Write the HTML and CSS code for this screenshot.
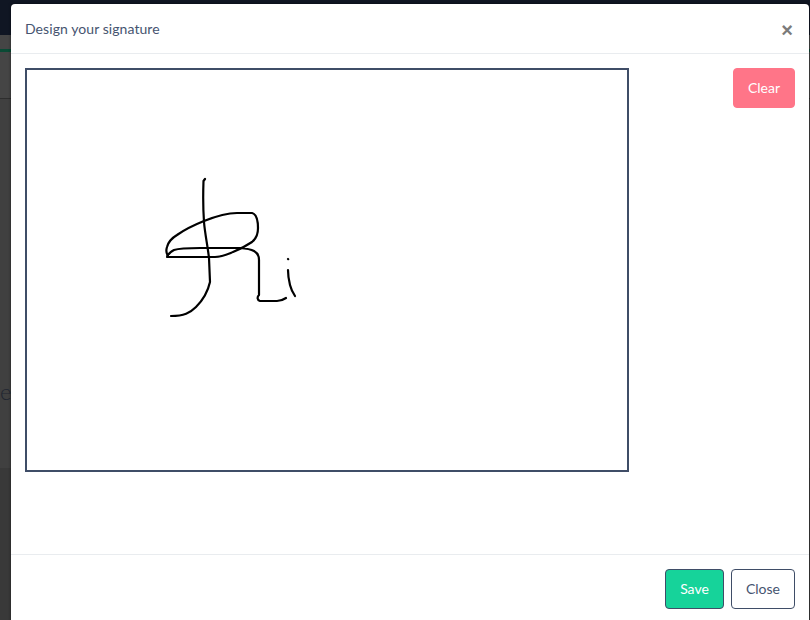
FILE: index.html
```html
<!DOCTYPE html>
<html lang="en">
<head>
    <meta charset="UTF-8">
    <title>Design your signature</title>
    <link rel="stylesheet" href="styles.css">
</head>
<body>

<div class="page-bg">
    <div class="page-top"></div>
    <div class="page-gray"></div>
    <div class="page-green"></div>
    <div class="page-gray page-tall"></div>
    <div class="page-rest"><span class="page-letter">e</span></div>
    <div class="page-low"></div>
</div>

<div class="modal">
    <div class="modal-header">
        <h5 class="modal-title">Design your signature</h5>
        <button class="close-x" type="button">&times;</button>
    </div>
    <div class="modal-body">
        <div class="sig-box">
            <svg class="sig-svg" width="600" height="400" viewBox="27 70 600 400">
                <path d="M205 179 L203.500 181 C203 195 203 208 204 222 C205 234 207.500 245 209 258 L210 282 C208 291 203 300 196 307 C190 313 184 316 171 316"/>
                <path d="M204 221 C214 217 226 213 237 213 L252 213 C256 214 258 218 258 228 C258 234 257 238 252 242 C246 246 238 250 233 252 C228 254 222 257 215 257 L167 257 C168 254 170 252 174 250 C180 248 190 248 200 248 L240 248 C252 249 259 251 259 260 L259 295 C257 297 257 300 260 301 L277 301 C280 301 283 300 286 298"/>
                <path d="M204 221 C194 225 184 230 177 235 C172 238 168 243 167 247 C166 250 166 253 168 256"/>
                <path d="M288 270 C288 276 289 281 290 285 C291 289 293 293 295 296"/>
                <path d="M288 259 L288.200 259.200"/>
            </svg>
        </div>
        <button class="btn btn-clear" type="button">Clear</button>
    </div>
    <div class="modal-footer">
        <button class="btn btn-save" type="button">Save</button>
        <button class="btn btn-close" type="button">Close</button>
    </div>
</div>

</body>
</html>
```

FILE: styles.css
```css
html, body { margin: 0; padding: 0; height: 100%; overflow: hidden; }
body { font-family: "Lato", "Noto Sans", sans-serif; background-color: #3d3d3d; }

.page-bg { position: absolute; inset: 0; display: flex; flex-direction: column; }
.page-top { height: 35px; background-color: #101623; }
.page-gray { height: 14px; background-color: #454545; }
.page-green { height: 3px; background-color: #0a4a35; }
.page-tall { height: 46px; border-bottom: 1px solid #2e2e2e; }
.page-rest { height: 369px; background-color: #404040; position: relative; overflow: hidden; }
.page-low { flex: 1; background-color: #393939; }
.page-letter { position: absolute; left: 0; top: 278px; font-size: 22px; line-height: 30px; font-weight: 300; color: #1f2530; }

.modal { position: absolute; left: 11px; top: 4px; width: 798px; height: 640px; background-color: #fff; border-radius: 4px 4px 0 0; box-shadow: 0 0 3px rgba(0,0,0,.55); }

.modal-header { box-sizing: border-box; height: 50px; border-bottom: 1px solid #e9ecef; display: flex; align-items: center; justify-content: space-between; padding: 0 16px 0 14px; }
.modal-title { margin: 0; font-size: 14px; font-weight: 400; color: #465470; letter-spacing: .07px; }
.close-x { border: 0; background: none; padding: 0; font-family: "Liberation Sans", sans-serif; font-size: 20px; font-weight: bold; color: #7b7b7b; line-height: 1; margin-top: 2px; }

.modal-body { box-sizing: border-box; height: 500px; display: flex; justify-content: space-between; align-items: flex-start; padding: 14px 14px 0 14px; }
.sig-box { width: 600px; height: 400px; border: 2px solid #3f4d67; }
.sig-svg { display: block; }
.sig-svg path { fill: none; stroke: #000; stroke-width: 2.2; stroke-linecap: round; stroke-linejoin: round; }

.btn { font-family: inherit; font-size: 14px; border-radius: 4px; cursor: pointer; height: 40px; padding: 0 0 2px; }
.btn-clear { width: 62px; background-color: #ff7588; border: 1px solid #ff7588; color: #fff; }

.modal-footer { border-top: 1px solid #e9ecef; display: flex; justify-content: flex-end; gap: 7px; padding: 14px 14px 0 0; }
.btn-save { width: 59px; background-color: #16d39a; border: 1px solid #3f4d67; color: #fff; }
.btn-close { width: 64px; background-color: #fff; border: 1px solid #3f4d67; color: #465470; }
```
